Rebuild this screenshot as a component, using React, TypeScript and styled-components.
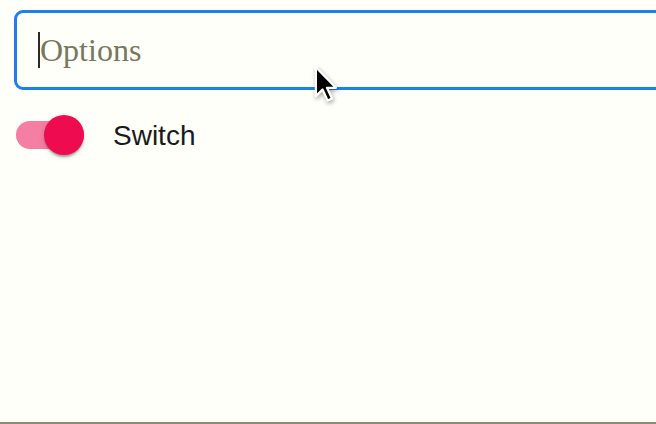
import styled, {createGlobalStyle} from "styled-components";

const GlobalStyle = createGlobalStyle`
  html, body {
    margin: 0;
    padding: 0;
    background: #fffffa;
    overflow: hidden;
  }
  * { box-sizing: border-box; }
`;

const Page = styled.div`
  position: relative;
  width: 656px;
  height: 424px;
  padding: 10px 0 0 14px;
  border-bottom: 2px solid #8c8c74;
  display: flex;
  flex-direction: column;
  gap: 25px;
  overflow: hidden;
`;

const Field = styled.div`
  position: relative;
  width: 720px;
  height: 80px;
  flex-shrink: 0;
`;

const Input = styled.input`
  width: 100%;
  height: 100%;
  border: 3px solid #1f80ec;
  border-radius: 9px;
  background: transparent;
  padding: 0 0 0 23px;
  font-family: "Liberation Serif", "Times New Roman", serif;
  font-size: 32px;
  color: #222;
  outline: none;
  caret-color: transparent;

  &::placeholder {
    color: #777760;
  }
`;

const Caret = styled.span`
  position: absolute;
  left: 24px;
  top: 22px;
  width: 2px;
  height: 36px;
  background: #2a2a2a;
`;

const Row = styled.label`
  display: flex;
  align-items: center;
  gap: 29px;
  padding-left: 2px;
  height: 40px;
`;

const SwitchRoot = styled.span`
  position: relative;
  width: 68px;
  height: 40px;
  display: flex;
  align-items: center;
`;

const Track = styled.span<{ $on: boolean }>`
  width: 68px;
  height: 28px;
  border-radius: 14px;
  background: ${p => (p.$on ? '#f57fa2' : '#bdbdbd')};
`;

const Thumb = styled.span<{ $on: boolean }>`
  position: absolute;
  top: 0;
  left: ${p => (p.$on ? '28px' : '0')};
  width: 40px;
  height: 40px;
  border-radius: 50%;
  background: ${p => (p.$on ? '#ef0b4f' : '#fafafa')};
  box-shadow: 0 4px 2px -2px rgba(0,0,0,0.2), 0 2px 2px 0 rgba(0,0,0,0.14), 0 2px 6px 0 rgba(0,0,0,0.12);
`;

const Label = styled.span`
  font-family: "Liberation Sans", Arial, sans-serif;
  font-size: 28px;
  color: #1a1a1a;
  line-height: 1;
  margin-top: 2px;
`;

const Pointer = styled.svg`
  position: absolute;
  left: 313px;
  top: 65px;
  filter: drop-shadow(1px 2px 2px rgba(0,0,0,0.35));
`;

function Switch({ on }: { on: boolean }) {
  return (
    <SwitchRoot>
      <Track $on={on} />
      <Thumb $on={on} />
    </SwitchRoot>
  );
}

export default function App() {
  return (
    <>
      <GlobalStyle />
      <Page>
        <Field>
          <Input placeholder="Options" readOnly />
          <Caret />
        </Field>
        <Row>
          <Switch on />
          <Label>Switch</Label>
        </Row>
        <Pointer width="28" height="40" viewBox="0 0 24 36">
          <path d="M2 2 L2 28 L8 22 L12.5 32 L16.5 30.2 L12 20.5 L20 20.5 Z" fill="#000" stroke="#fff" strokeWidth="2" strokeLinejoin="round" />
        </Pointer>
      </Page>
    </>
  );
}
